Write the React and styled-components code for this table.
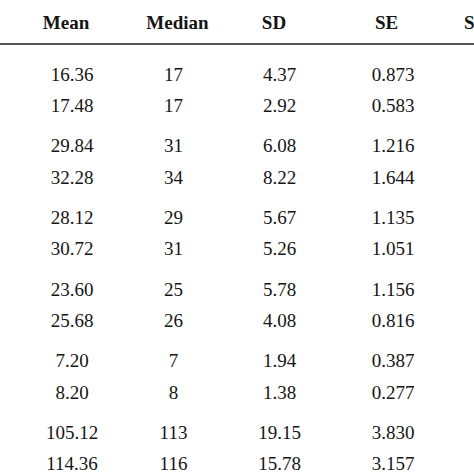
import React from "react";
import styled, { createGlobalStyle } from "styled-components";

const Global = createGlobalStyle`
  html, body {
    margin: 0;
    padding: 0;
    background: #ffffff;
    overflow: hidden;
    width: 474px;
    height: 474px;
  }
  body {
    font-family: "Liberation Serif", "Times New Roman", serif;
    color: #151515;
  }
`;

const Page = styled.div`
  width: 474px;
  height: 474px;
  overflow: hidden;
  background: #fff;
`;

const Grid = styled.div`
  display: grid;
  grid-template-columns: 100px 103px 109px 118px 200px;
  padding-left: 22px;
  white-space: nowrap;
`;

const Header = styled(Grid)`
  padding-top: 11.6px;
  padding-bottom: 9.4px;
  border-bottom: 2px solid #555;
  width: 474px;
  box-sizing: border-box;
  overflow: hidden;
`;

const HeadCell = styled.div`
  font-weight: bold;
  font-size: 19px;
  line-height: 22px;
  text-align: ${(p) => (p.$left ? "left" : "center")};
  padding-left: ${(p) => p.$pl || 0}px;
  padding-right: ${(p) => p.$pr || 0}px;
`;

const Body = styled.div`
  display: flex;
  flex-direction: column;
  gap: 8.6px;
  padding-top: 13.8px;
`;

const Group = styled.div`
  display: flex;
  flex-direction: column;
`;

const Row = styled(Grid)`
  height: 31.5px;
  font-size: 19px;
  line-height: 31.5px;
`;

const Cell = styled.div`
  text-align: center;
`;

const groups = [
  [
    ["16.36", "17", "4.37", "0.873"],
    ["17.48", "17", "2.92", "0.583"],
  ],
  [
    ["29.84", "31", "6.08", "1.216"],
    ["32.28", "34", "8.22", "1.644"],
  ],
  [
    ["28.12", "29", "5.67", "1.135"],
    ["30.72", "31", "5.26", "1.051"],
  ],
  [
    ["23.60", "25", "5.78", "1.156"],
    ["25.68", "26", "4.08", "0.816"],
  ],
  [
    ["7.20", "7", "1.94", "0.387"],
    ["8.20", "8", "1.38", "0.277"],
  ],
  [
    ["105.12", "113", "19.15", "3.830"],
    ["114.36", "116", "15.78", "3.157"],
  ],
];

export default function App() {
  return (
    <Page>
      <Global />
      <Header>
        <HeadCell $pr={12}>Mean</HeadCell>
        <HeadCell $pl={8}>Median</HeadCell>
        <HeadCell $pr={11}>SD</HeadCell>
        <HeadCell $pr={13}>SE</HeadCell>
        <HeadCell $left $pl={12}>Skewness</HeadCell>
      </Header>
      <Body>
        {groups.map((g, gi) => (
          <Group key={gi}>
            {g.map((r, ri) => (
              <Row key={ri}>
                {r.map((v, ci) => (
                  <Cell key={ci}>{v}</Cell>
                ))}
              </Row>
            ))}
          </Group>
        ))}
      </Body>
    </Page>
  );
}
